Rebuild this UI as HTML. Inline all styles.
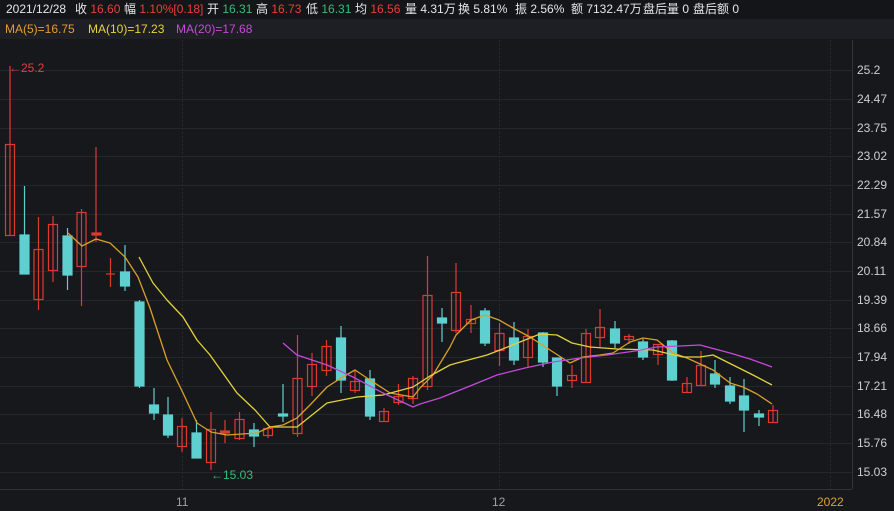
<!DOCTYPE html>
<html><head><meta charset="utf-8"><style>
html,body{margin:0;padding:0;background:#16181c;width:894px;height:511px;overflow:hidden;font-family:"Liberation Sans","Noto Sans CJK SC",sans-serif}
.h1{position:absolute;left:0;top:0;width:894px;height:19px;background:#141518;color:#e6e6e6;font-size:12px;line-height:19px;white-space:nowrap}
.h1 span{position:absolute;top:0}
.h1 b{font-weight:normal}
.h2{position:absolute;left:0;top:19px;width:894px;height:20px;background:#1d1f24;font-size:12px;line-height:20px;white-space:nowrap}
.r{color:#e8403a}.g{color:#3dba7a}
svg{position:absolute;left:0;top:0}
</style></head><body>
<div class="h1"><span style="left:6px">2021/12/28</span><span style="left:75px">收 <b class="r">16.60</b></span><span style="left:124px">幅 <b class="r">1.10%[0.18]</b></span><span style="left:207px">开 <b class="g">16.31</b></span><span style="left:256px">高 <b class="r">16.73</b></span><span style="left:306px">低 <b class="g">16.31</b></span><span style="left:355px">均 <b class="r">16.56</b></span><span style="left:405px">量 4.31万</span><span style="left:458px">换 5.81%</span><span style="left:515px">振 2.56%</span><span style="left:571px">额 7132.47万</span><span style="left:643px">盘后量 0</span><span style="left:693px">盘后额 0</span></div>
<div class="h2"><span style="position:absolute;left:5px;color:#e0a030">MA(5)=16.75</span><span style="position:absolute;left:88px;color:#e6d43a">MA(10)=17.23</span><span style="position:absolute;left:176px;color:#c34bd6">MA(20)=17.68</span></div>
<svg width="894" height="511" viewBox="0 0 894 511">
<g stroke="#24272d" stroke-width="1">
<line x1="0" y1="70.5" x2="852" y2="70.5"/><line x1="0" y1="99.5" x2="852" y2="99.5"/><line x1="0" y1="128.5" x2="852" y2="128.5"/><line x1="0" y1="156.5" x2="852" y2="156.5"/><line x1="0" y1="185.5" x2="852" y2="185.5"/><line x1="0" y1="214.5" x2="852" y2="214.5"/><line x1="0" y1="242.5" x2="852" y2="242.5"/><line x1="0" y1="271.5" x2="852" y2="271.5"/><line x1="0" y1="300.5" x2="852" y2="300.5"/><line x1="0" y1="328.5" x2="852" y2="328.5"/><line x1="0" y1="357.5" x2="852" y2="357.5"/><line x1="0" y1="386.5" x2="852" y2="386.5"/><line x1="0" y1="414.5" x2="852" y2="414.5"/><line x1="0" y1="443.5" x2="852" y2="443.5"/><line x1="0" y1="472.5" x2="852" y2="472.5"/>
</g>
<g stroke="#262a30" stroke-dasharray="2,2"><line x1="182.5" y1="40" x2="182.5" y2="489"/><line x1="499.5" y1="40" x2="499.5" y2="489"/><line x1="830.5" y1="40" x2="830.5" y2="489"/></g>
<line x1="852.5" y1="40" x2="852.5" y2="489" stroke="#30343a"/>
<line x1="0" y1="489.5" x2="852" y2="489.5" stroke="#30343a"/>
<g font-size="12" fill="#cfcfcf" font-family="Liberation Sans,sans-serif">
<text x="857" y="74">25.2</text><text x="857" y="103">24.47</text><text x="857" y="132">23.75</text><text x="857" y="160">23.02</text><text x="857" y="189">22.29</text><text x="857" y="218">21.57</text><text x="857" y="246">20.84</text><text x="857" y="275">20.11</text><text x="857" y="304">19.39</text><text x="857" y="332">18.66</text><text x="857" y="361">17.94</text><text x="857" y="390">17.21</text><text x="857" y="418">16.48</text><text x="857" y="447">15.76</text><text x="857" y="476">15.03</text>
<text x="176" y="506" fill="#a0a0a0">11</text><text x="492" y="506" fill="#a0a0a0">12</text><text x="817" y="506" fill="#e0a030">2022</text>
<text x="9" y="72" fill="#e0403a">←25.2</text><text x="211" y="479" fill="#3dba7a">←15.03</text>
</g>
<g stroke="#dd3a32" stroke-width="1.2" fill="none">
<line x1="10" y1="66" x2="10" y2="236"/><rect x="5.5" y="144.5" width="9" height="91"/>
<line x1="38.5" y1="217" x2="38.5" y2="310"/><rect x="34" y="249.5" width="9" height="50"/>
<line x1="53" y1="216" x2="53" y2="282"/><rect x="48.5" y="224.5" width="9" height="46"/>
<line x1="81.5" y1="209" x2="81.5" y2="306"/><rect x="77" y="212.5" width="9" height="54"/>
<line x1="96" y1="147" x2="96" y2="242"/><rect x="92" y="233" width="9" height="2" fill="#dd3a32"/>
<line x1="110.5" y1="258" x2="110.5" y2="287"/><line x1="106" y1="274" x2="115" y2="274"/>
<line x1="182" y1="418" x2="182" y2="452"/><rect x="177.5" y="426.5" width="9" height="20"/>
<line x1="211" y1="412" x2="211" y2="470"/><rect x="206.5" y="429.5" width="9" height="33"/>
<line x1="225" y1="420" x2="225" y2="443"/><rect x="220.5" y="431" width="9" height="2" fill="#dd3a32"/>
<line x1="239.5" y1="412" x2="239.5" y2="440"/><rect x="235" y="419.5" width="9" height="19"/>
<line x1="268" y1="427" x2="268" y2="438"/><rect x="263.5" y="428.5" width="9" height="7"/>
<line x1="297.5" y1="335" x2="297.5" y2="437"/><rect x="293" y="378.5" width="9" height="55"/>
<line x1="312" y1="353" x2="312" y2="396"/><rect x="307.5" y="364.5" width="9" height="22"/>
<line x1="326.5" y1="340" x2="326.5" y2="376"/><rect x="322" y="346.5" width="9" height="24"/>
<line x1="355" y1="370" x2="355" y2="393"/><rect x="350.5" y="381.5" width="9" height="9"/>
<line x1="384" y1="408" x2="384" y2="422"/><rect x="379.5" y="411.5" width="9" height="10"/>
<line x1="398.5" y1="384" x2="398.5" y2="405"/><rect x="394" y="396.5" width="9" height="6"/>
<line x1="413" y1="376" x2="413" y2="404"/><rect x="408.5" y="378.5" width="9" height="20"/>
<line x1="427.5" y1="256" x2="427.5" y2="390"/><rect x="423" y="295.5" width="9" height="91"/>
<line x1="456" y1="263" x2="456" y2="333"/><rect x="451.5" y="292.5" width="9" height="38"/>
<line x1="471" y1="305" x2="471" y2="333"/><rect x="466.5" y="319.5" width="9" height="4"/>
<line x1="499.5" y1="323" x2="499.5" y2="366"/><rect x="495" y="333.5" width="9" height="17"/>
<line x1="528" y1="329" x2="528" y2="367"/><rect x="523.5" y="336.5" width="9" height="21"/>
<line x1="572" y1="365" x2="572" y2="388"/><rect x="567.5" y="375.5" width="9" height="5"/>
<line x1="586" y1="329" x2="586" y2="383"/><rect x="581.5" y="333.5" width="9" height="49"/>
<line x1="600" y1="309" x2="600" y2="347"/><rect x="595.5" y="327.5" width="9" height="10"/>
<line x1="629" y1="334" x2="629" y2="344"/><rect x="624.5" y="336.5" width="9" height="3"/>
<line x1="658" y1="344" x2="658" y2="365"/><rect x="653.5" y="344.5" width="9" height="10"/>
<line x1="687" y1="377" x2="687" y2="392"/><rect x="682.5" y="383.5" width="9" height="9"/>
<line x1="701" y1="351" x2="701" y2="386"/><rect x="696.5" y="365.5" width="9" height="20"/>
<line x1="773" y1="405" x2="773" y2="422"/><rect x="768.5" y="410.5" width="9" height="12"/>
</g>
<g stroke="#5fd0d0" fill="#5fd0d0" stroke-width="1.2">
<line x1="24.5" y1="186" x2="24.5" y2="274"/><rect x="20" y="235" width="9" height="39"/>
<line x1="67.5" y1="228" x2="67.5" y2="290"/><rect x="63" y="236" width="9" height="39"/>
<line x1="125" y1="245" x2="125" y2="291"/><rect x="120.5" y="272" width="9" height="14"/>
<line x1="139.5" y1="300" x2="139.5" y2="388"/><rect x="135" y="302" width="9" height="84"/>
<line x1="154" y1="388" x2="154" y2="420"/><rect x="149.5" y="405" width="9" height="8"/>
<line x1="168" y1="397" x2="168" y2="438"/><rect x="163.5" y="415" width="9" height="20"/>
<line x1="196.5" y1="420" x2="196.5" y2="458"/><rect x="192" y="433" width="9" height="25"/>
<line x1="254" y1="423" x2="254" y2="447"/><rect x="249.5" y="430" width="9" height="6"/>
<line x1="283" y1="384" x2="283" y2="422"/><rect x="278.5" y="414" width="9" height="2"/>
<line x1="341" y1="326" x2="341" y2="393"/><rect x="336.5" y="338" width="9" height="42"/>
<line x1="370" y1="370" x2="370" y2="420"/><rect x="365.5" y="379" width="9" height="37"/>
<line x1="442" y1="308" x2="442" y2="342"/><rect x="437.5" y="318" width="9" height="5"/>
<line x1="485" y1="308" x2="485" y2="346"/><rect x="480.5" y="311" width="9" height="32"/>
<line x1="514" y1="322" x2="514" y2="365"/><rect x="509.5" y="338" width="9" height="22"/>
<line x1="543" y1="332" x2="543" y2="367"/><rect x="538.5" y="333" width="9" height="29"/>
<line x1="557" y1="358" x2="557" y2="396"/><rect x="552.5" y="358" width="9" height="28"/>
<line x1="615" y1="321" x2="615" y2="348"/><rect x="610.5" y="329" width="9" height="14"/>
<line x1="643" y1="339" x2="643" y2="360"/><rect x="638.5" y="342" width="9" height="15"/>
<line x1="672" y1="340" x2="672" y2="381"/><rect x="667.5" y="341" width="9" height="39"/>
<line x1="715" y1="360" x2="715" y2="388"/><rect x="710.5" y="374" width="9" height="10"/>
<line x1="730" y1="377" x2="730" y2="404"/><rect x="725.5" y="386" width="9" height="15"/>
<line x1="744" y1="379" x2="744" y2="432"/><rect x="739.5" y="396" width="9" height="14"/>
<line x1="759" y1="410" x2="759" y2="426"/><rect x="754.5" y="414" width="9" height="3"/>
</g>
<g fill="none" stroke-width="1.3" stroke-linejoin="round">
<polyline stroke="#d8a028" points="68,233 82,246 96,239 110,243 125,257 138,277 150,308 167,360 183,393 197,423 211,432 227,435 257,433 270,427 283,425 297,418 310,405 327,387 341,378 355,370 370,380 390,393 413,397 420,388 433,375 450,347 456,335 471,320 485,315 499,320 513,328 530,337 550,350 570,363 583,357 600,355 613,353 630,342 643,338 657,340 673,353 687,358 700,364 713,370 730,383 743,387 757,394 772,404"/>
<polyline stroke="#e3d23a" points="139,257 153,283 167,300 183,317 197,340 210,355 237,393 255,410 270,427 297,427 327,403 357,397 383,395 413,387 430,376 450,365 457,363 487,355 500,350 520,342 540,334 557,335 572,343 590,347 617,349 653,350 683,357 700,357 713,355 733,365 753,375 772,385"/>
<polyline stroke="#c34bd6" points="283,343 297,355 327,365 353,377 383,393 413,407 420,404 440,398 470,386 497,375 525,368 553,362 580,358 607,355 635,351 657,347 680,346 700,345 715,349 730,353 750,359 772,367"/>
</g>
</svg>
</body></html>
